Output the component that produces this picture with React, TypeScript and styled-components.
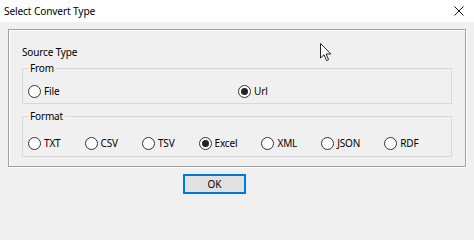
import React from "react"
import styled, {createGlobalStyle} from "styled-components"

const GlobalStyle = createGlobalStyle`
  html, body {
    margin: 0;
    padding: 0;
  }

  body {
    width: 474px;
    height: 204px;
    overflow: hidden;
    background: #f0f0f0;
    font-family: "Noto Sans", "Open Sans", sans-serif;
    font-size: 10px;
    letter-spacing: -0.15px;
    color: #000;
  }
`

const SOURCES = ["File", "Url"]
const FORMATS = ["TXT", "CSV", "TSV", "Excel", "XML", "JSON", "RDF"]

export default function App() {
  return (
    <>
      <GlobalStyle/>
      <Window>
        <TitleBar>
          <Title>Select Convert Type</Title>
          <CloseIcon/>
        </TitleBar>
        <Body>
          <Panel>
            <PanelLabel>Source Type</PanelLabel>
            <Group>
              <GroupLegend>From</GroupLegend>
              <SourceRow>
                {SOURCES.map((name) => (
                  <Radio key={name} label={name} checked={name === "Url"}/>
                ))}
              </SourceRow>
            </Group>
            <Group $format>
              <GroupLegend>Format</GroupLegend>
              <FormatRow>
                {FORMATS.map((name) => (
                  <Radio key={name} label={name} checked={name === "Excel"}/>
                ))}
              </FormatRow>
            </Group>
          </Panel>
          <Footer>
            <OkButton>OK</OkButton>
          </Footer>
        </Body>
        <Cursor/>
      </Window>
    </>
  )
}

function Radio({label, checked}: { label: string; checked: boolean }) {
  return (
    <RadioItem>
      <RadioCircle $checked={checked}/>
      <span>{label}</span>
    </RadioItem>
  )
}

function CloseIcon() {
  return (
    <svg width="10" height="10" viewBox="0 0 10 10">
      <path d="M0.5 0.5 L9.5 9.5 M9.5 0.5 L0.5 9.5" stroke="#111" strokeWidth="1"/>
    </svg>
  )
}

function Cursor() {
  return (
    <CursorSvg width="12" height="19" viewBox="0 0 12 19">
      <path
        d="M0.5 0.5 L0.5 15 L4 11.7 L6.6 17.6 L8.6 16.7 L6.1 11 L10.8 11 Z"
        fill="#fff"
        stroke="#222"
        strokeWidth="1"
        strokeLinejoin="round"
      />
    </CursorSvg>
  )
}

const Window = styled.div`
  position: relative;
  width: 474px;
  height: 204px;
  display: flex;
  flex-direction: column;
  background: #f0f0f0;
`

const TitleBar = styled.div`
  height: 22px;
  flex-shrink: 0;
  background: #fff;
  display: flex;
  align-items: center;
  justify-content: space-between;
  padding: 0 10px 0 4px;
`

const Title = styled.span`
  font-size: 10.2px;
`

const Body = styled.div`
  flex: 1;
  display: flex;
  flex-direction: column;
  padding: 7px 8px 0 8px;
`

const Panel = styled.div`
  height: 138px;
  box-sizing: border-box;
  border: 1px solid #a0a0a0;
  box-shadow: inset 1px 1px 0 #fff, 1px 1px 0 #fff;
  padding: 15px 13px 0 13px;
`

const PanelLabel = styled.div`
  line-height: 15px;
  height: 15px;
`

const Group = styled.fieldset<{ $format?: boolean }>`
  margin: ${({$format}) => ($format ? "5px" : "1px")} 0 0 0;
  padding: ${({$format}) => ($format ? "12px 5px 5px" : "8px 5px 4px")};
  border: 1px solid #d8d8d8;
  min-width: 0;
`

const GroupLegend = styled.legend`
  padding: 0 2px;
  line-height: 15px;
`

const SourceRow = styled.div`
  display: grid;
  grid-template-columns: 210px auto;
  height: 15px;
`

const FormatRow = styled.div`
  display: flex;
  gap: 24px;
  height: 15px;
`

const RadioItem = styled.label`
  display: flex;
  align-items: center;
  gap: 3px;
  line-height: 15px;
`

const RadioCircle = styled.span<{ $checked: boolean }>`
  width: 13px;
  height: 13px;
  box-sizing: border-box;
  border: 1px solid #333;
  border-radius: 50%;
  background: #fff;
  display: flex;
  align-items: center;
  justify-content: center;

  &::after {
    content: "";
    width: 7px;
    height: 7px;
    border-radius: 50%;
    background: #222;
    display: ${({$checked}) => ($checked ? "block" : "none")};
  }
`

const Footer = styled.div`
  display: flex;
  padding: 7px 0 0 175px;
`

const OkButton = styled.button`
  width: 63px;
  height: 20px;
  box-sizing: border-box;
  border: 1px solid #0078d7;
  box-shadow: inset 0 0 0 1px #0078d7;
  background: #e1e1e1;
  font-family: inherit;
  font-size: 10px;
  color: #000;
  padding: 0;
`

const CursorSvg = styled.svg`
  position: absolute;
  left: 320px;
  top: 43px;
`
